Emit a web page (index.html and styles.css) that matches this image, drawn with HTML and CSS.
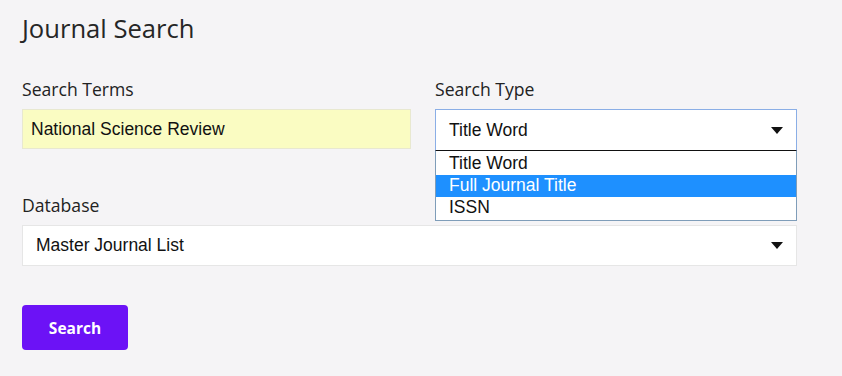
FILE: index.html
```html
<!DOCTYPE html>
<html>
<head>
<meta charset="utf-8">
<link rel="stylesheet" href="styles.css">
</head>
<body>
<main class="page">
  <h1 class="title">Journal Search</h1>
  <div class="row">
    <div class="field">
      <label class="label">Search Terms</label>
      <div class="input autofill">National Science Review</div>
    </div>
    <div class="field">
      <label class="label">Search Type</label>
      <div class="select-wrap">
        <div class="input select focused">
          <span>Title Word</span>
          <svg class="caret" width="12" height="7" viewBox="0 0 12 7"><path d="M0 0H12L6 7Z" fill="#111"/></svg>
        </div>
        <ul class="menu">
          <li class="opt">Title Word</li>
          <li class="opt active">Full Journal Title</li>
          <li class="opt">ISSN</li>
        </ul>
      </div>
    </div>
  </div>
  <div class="field full">
    <label class="label">Database</label>
    <div class="input select tall">
      <span>Master Journal List</span>
      <svg class="caret" width="12" height="7" viewBox="0 0 12 7"><path d="M0 0H12L6 7Z" fill="#111"/></svg>
    </div>
  </div>
  <button class="btn">Search</button>
</main>
</body>
</html>
```
FILE: styles.css
```css
html, body {
  margin: 0;
  padding: 0;
  background: #f5f4f6;
}
.page {
  padding: 12px 45px 0 22px;
  font-family: "Open Sans", "Noto Sans", sans-serif;
  color: #222;
}
.title {
  margin: 0;
  font-size: 25.6px;
  font-weight: 400;
  line-height: 34px;
  color: #262626;
}
.row {
  display: grid;
  grid-template-columns: 389px 1fr;
  column-gap: 24px;
  margin-top: 32px;
}
.field {
  display: flex;
  flex-direction: column;
}
.label {
  font-size: 17.6px;
  line-height: 22px;
  margin-bottom: 9px;
  color: #222;
}
.input {
  box-sizing: border-box;
  height: 40px;
  display: flex;
  align-items: center;
  font-family: "Liberation Sans", Arial, sans-serif;
  font-size: 17.5px;
  color: #111;
  background: #fff;
  border: 1px solid #e6e6e6;
}
.autofill {
  background: #fafcc2;
  border-color: #e8e8d0;
  padding-left: 8px;
}
.select {
  justify-content: space-between;
  padding: 0 13px 0 13px;
}
.tall {
  height: 41px;
}
.focused {
  height: 42px;
  border: 1px solid #8aaee6;
  border-bottom: 1px solid #111;
}
.caret {
  display: block;
}
.select-wrap {
  position: relative;
}
.menu {
  position: absolute;
  left: 0;
  right: 0;
  top: 42px;
  margin: 0;
  padding: 2px 0 1px;
  list-style: none;
  background: #fff;
  border: 1px solid #7f9db9;
  border-top: none;
  z-index: 2;
  font-family: "Liberation Sans", Arial, sans-serif;
  font-size: 17.5px;
  color: #111;
}
.opt {
  height: 22px;
  line-height: 21px;
  padding-left: 13px;
}
.opt.active {
  background: #1e90ff;
  color: #fff;
}
.full {
  margin-top: 43px;
}
.btn {
  margin-top: 39px;
  width: 106px;
  height: 45px;
  border: none;
  border-radius: 4px;
  background: #6c12f6;
  color: #fff;
  font-family: "Open Sans", "Noto Sans", sans-serif;
  font-weight: 700;
  font-size: 15.5px;
}
```
